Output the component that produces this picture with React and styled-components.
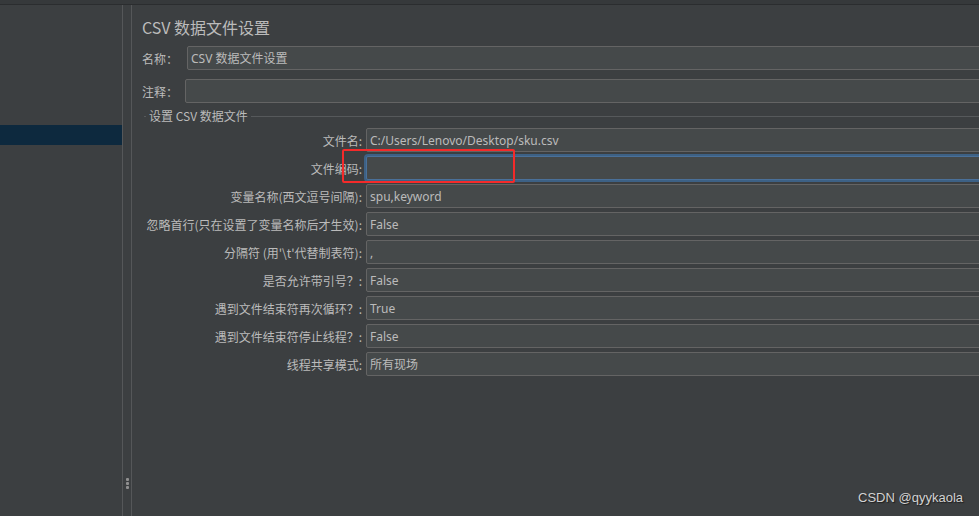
import React from "react";
import styled, { createGlobalStyle } from "styled-components";

const GlobalStyle = createGlobalStyle`
  html, body { margin: 0; padding: 0; background: #3c3f41; overflow: hidden; }
  #root { width: 979px; height: 516px; }
  * { box-sizing: border-box; }
`;

const FONT = `"Noto Sans", "Noto Sans CJK SC", sans-serif`;

const Page = styled.div`
  position: relative;
  width: 979px;
  height: 516px;
  display: flex;
  flex-direction: column;
  background: #3c3f41;
  color: #bbbbbb;
  font-family: ${FONT};
  overflow: hidden;
`;

const TopStrip = styled.div`
  height: 5px;
  flex: none;
  background: #36393b;
  border-bottom: 1px solid #2b2d2f;
`;

const Body = styled.div`
  flex: 1;
  display: flex;
  min-height: 0;
`;

const LeftPanel = styled.div`
  width: 122px;
  flex: none;
  padding-top: 120px;
`;

const SelectedRow = styled.div`
  height: 20px;
  background: #0d293e;
`;

const Splitter = styled.div`
  width: 10px;
  flex: none;
  border-left: 1px solid #555759;
  border-right: 1px solid #555759;
  display: flex;
  flex-direction: column;
  justify-content: flex-end;
  align-items: center;
  gap: 1px;
  padding-bottom: 27px;
`;

const Dot = styled.span`
  width: 3px;
  height: 3px;
  border-radius: 1px;
  background: #909090;
`;

const Content = styled.div`
  flex: 1;
  min-width: 0;
  padding: 12px 0 0 10px;
  display: flex;
  flex-direction: column;
  overflow: hidden;
`;

const Title = styled.div`
  font-size: 16px;
  line-height: 20px;
  height: 20px;
  color: #bbbbbb;
  font-family: "Noto Sans CJK SC", sans-serif;
`;

const TopRow = styled.div`
  display: flex;
  align-items: center;
  margin-top: ${(p) => p.$gap}px;
  margin-right: -6px;
`;

const TopLabel = styled.label`
  width: ${(p) => p.$w}px;
  flex: none;
  font-size: 12px;
  font-family: "Noto Sans CJK SC", sans-serif;
  white-space: nowrap;
`;

const Field = styled.div`
  flex: 1;
  height: 24px;
  background: #45494a;
  border: 1px solid ${(p) => (p.$focused ? "#4a7099" : "#646464")};
  border-radius: 2px;
  box-shadow: ${(p) => (p.$focused ? "0 0 0 2px #3d6185" : "none")};
  padding: 0 3px;
  display: flex;
  align-items: center;
  font-size: 12px;
  font-family: ${FONT};
  color: #bbbbbb;
  white-space: nowrap;
  margin-right: -6px;
`;

const Group = styled.fieldset`
  margin: 6px 0 0 2px;
  padding: 5px 0 0 0;
  border: 0;
  border-top: 1px solid #56595b;
  min-width: 0;
`;

const Legend = styled.legend`
  margin-left: 2px;
  padding: 0 3px;
  font-size: 12px;
  line-height: 14px;
  font-family: "Noto Sans CJK SC", sans-serif;
  color: #bbbbbb;
`;

const Grid = styled.div`
  display: grid;
  grid-template-columns: 218px 1fr;
  column-gap: 4px;
  row-gap: 4px;
  grid-auto-rows: 24px;
`;

const RowLabel = styled.label`
  justify-self: end;
  align-self: center;
  font-size: 12px;
  font-family: "Noto Sans CJK SC", sans-serif;
  white-space: nowrap;
  color: #bbbbbb;
`;

const Annotation = styled.div`
  position: absolute;
  left: 342px;
  top: 149px;
  width: 173px;
  height: 34px;
  border: 2px solid #f42a2a;
  border-radius: 2px;
  pointer-events: none;
`;

const Watermark = styled.div`
  position: absolute;
  right: 16px;
  bottom: 10px;
  font-family: "Liberation Sans", Arial, sans-serif;
  font-size: 13px;
  line-height: 16px;
  color: #d2d2d2;
  text-shadow: 1px 1px 1px #1e1e1e;
`;

const rows = [
  { label: "文件名:", value: "C:/Users/Lenovo/Desktop/sku.csv" },
  { label: "文件编码:", value: "", focused: true },
  { label: "变量名称(西文逗号间隔):", value: "spu,keyword" },
  { label: "忽略首行(只在设置了变量名称后才生效):", value: "False" },
  { label: "分隔符 (用'\\t'代替制表符):", value: "," },
  { label: "是否允许带引号？:", value: "False" },
  { label: "遇到文件结束符再次循环？:", value: "True" },
  { label: "遇到文件结束符停止线程？:", value: "False" },
  { label: "线程共享模式:", value: "所有现场" },
];

export default function App() {
  return (
    <>
      <GlobalStyle />
      <Page>
        <TopStrip />
        <Body>
          <LeftPanel>
            <SelectedRow />
          </LeftPanel>
          <Splitter>
            <Dot />
            <Dot />
            <Dot />
          </Splitter>
          <Content>
            <Title>CSV 数据文件设置</Title>
            <TopRow $gap={9}>
              <TopLabel $w={45}>名称：</TopLabel>
              <Field>CSV 数据文件设置</Field>
            </TopRow>
            <TopRow $gap={9}>
              <TopLabel $w={43}>注释：</TopLabel>
              <Field />
            </TopRow>
            <Group>
              <Legend>设置 CSV 数据文件</Legend>
              <Grid>
                {rows.map((r) => (
                  <React.Fragment key={r.label}>
                    <RowLabel>{r.label}</RowLabel>
                    <Field $focused={r.focused}>{r.value}</Field>
                  </React.Fragment>
                ))}
              </Grid>
            </Group>
          </Content>
        </Body>
        <Annotation />
        <Watermark>CSDN @qyykaola</Watermark>
      </Page>
    </>
  );
}
